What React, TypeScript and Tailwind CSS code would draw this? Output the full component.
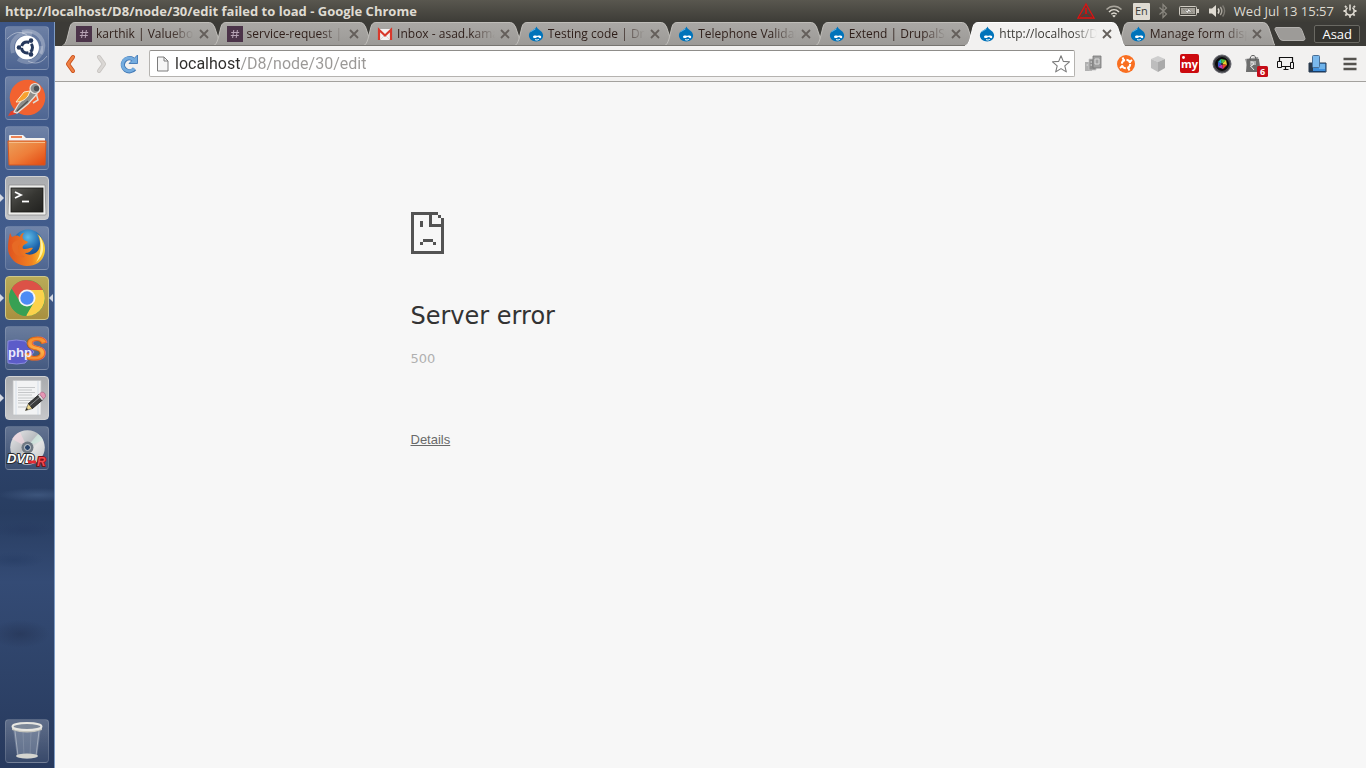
import { ReactNode } from "react";
import clsx from "clsx";

type Favicon = "slack" | "gmail" | "drupal";

interface TabData {
  title: string;
  icon: Favicon;
  active?: boolean;
}

const tabs: TabData[] = [
  { title: "karthik | Valuebound", icon: "slack" },
  { title: "service-request | Valuebound", icon: "slack" },
  { title: "Inbox - asad.kamal@gmail", icon: "gmail" },
  { title: "Testing code | Drupal.org", icon: "drupal" },
  { title: "Telephone Validation", icon: "drupal" },
  { title: "Extend | DrupalSite", icon: "drupal" },
  { title: "http://localhost/D8/node", icon: "drupal", active: true },
  { title: "Manage form display", icon: "drupal" },
];

const FaviconIcon = ({ icon }: { icon: Favicon }) => {
  if (icon === "slack") {
    return (
      <svg viewBox="0 0 16 16" className="size-4 shrink-0" aria-hidden="true">
        <rect width="16" height="16" fill="#4b3349" />
        <path d="M6.8 4 5.6 12M10.4 4 9.2 12M4.2 6.5h8M3.8 9.5h8" stroke="#b7a3b5" fill="none" />
      </svg>
    );
  }
  if (icon === "gmail") {
    return (
      <svg viewBox="0 0 16 16" className="size-4 shrink-0" aria-hidden="true">
        <path d="M1 3h14v11H1z" fill="#f3f3f3" />
        <path d="M3 14 8 9l5 5" stroke="#d6d6d6" fill="none" />
        <path d="M2 14V3.800l6 5.700 6-5.700V14" stroke="#d8392c" strokeWidth="2.200" fill="none" />
      </svg>
    );
  }
  return (
    <svg viewBox="0 0 16 16" className="size-4 shrink-0" aria-hidden="true">
      <path
        d="M8.4.5c.8 1.900 2 2.800 3.600 3.900 2 1.300 3.100 3 3.100 5.200 0 3.600-3.100 5.900-6.900 5.900-4 0-7.300-2.300-7.300-6.200 0-2.400 1.500-4 3.600-5.100C6.500 3.200 7.900 2.200 8.400.5z"
        fill="#0073ba"
      />
      <path
        d="M11.200 9.600c1.400-.2 2.200.7 2 1.700-.2.900-1 1-1.700.7-.7-.4-1.200-1-1.900-1-.8 0-1.500 1.200-3 1.100-1.200-.1-1.800-.9-1.500-1.700.3-.9 1.400-1.200 2.500-.9 1.200.3 2.400.3 3.600.1z"
        fill="#fff"
      />
      <path d="M7 13.600c1.200.6 2.900.5 3.800-.2" stroke="#fff" fill="none" />
      <path d="M2.500 5.800C4 4.600 6.200 4 7.500 3" stroke="#5ab2e6" fill="none" />
    </svg>
  );
};

const Tab = ({ title, icon, active }: TabData) => {
  return (
    <li
      className={clsx(
        "relative -mr-[9px] flex h-6 min-w-0 flex-1 items-center pr-3 pl-[14px]",
        active && "z-10",
      )}
    >
      <svg
        viewBox="0 0 160 24"
        preserveAspectRatio="none"
        className="absolute inset-0 size-full"
        aria-hidden="true"
      >
        <defs>
          <linearGradient id="tab-fill" x1="0" y1="0" x2="0" y2="1">
            <stop offset="0" stopColor="#aaa8a5" />
            <stop offset="1" stopColor="#9b9996" />
          </linearGradient>
        </defs>
        <path
          d="M0 24C3 23 4 20 5 17L8 5Q9 .5 13 .5H148Q151 .5 153 5L157 17Q158 22 160 24z"
          fill={active ? "#f2f1f0" : "url(#tab-fill)"}
        />
        <path
          d="M0 24C3 23 4 20 5 17L8 5Q9 .5 13 .5H148Q151 .5 153 5L157 17Q158 22 160 24"
          fill="none"
          stroke={active ? "#ffffff" : "#c0beba"}
        />
        {!active && <path d="M0 23.500H160" stroke="#75736f" />}
      </svg>
      <span className="relative flex min-w-0 flex-1 items-center gap-1">
        <FaviconIcon icon={icon} />
        <a
          href="#"
          className={clsx(
            "min-w-0 flex-1 overflow-hidden text-[12px] leading-5 whitespace-nowrap",
            "mask-r-from-75% mask-r-to-100%",
            active ? "text-[#3c3b37]" : "text-[#2f1f1a]",
          )}
        >
          {title}
        </a>
        <button aria-label={`Close ${title}`} className="flex size-3 items-center justify-center">
          <svg viewBox="0 0 10 10" className="size-[10px]" aria-hidden="true">
            <path d="M1 1l8 8M9 1l-8 8" stroke="#645f5b" strokeWidth="1.800" />
          </svg>
        </button>
      </span>
    </li>
  );
};

const TopPanel = () => {
  return (
    <header className="flex h-[22px] items-center justify-between bg-gradient-to-b from-[#59574f] to-[#3d3c37] pr-2 pl-[5px] text-[#dfdbd2]">
      <h1 className="text-[13px] leading-5 font-bold whitespace-nowrap">
        http://localhost/D8/node/30/edit failed to load - Google Chrome
      </h1>
      <div className="flex items-center">
        <svg viewBox="0 0 18 18" className="mr-[10px] size-[18px]" aria-label="Warning">
          <path d="M9 2 17 16H1z" fill="none" stroke="#e01212" strokeWidth="1.300" />
          <path d="M9 4v7M9 11l-7 4.500M9 11l7 4.500" stroke="#a31613" fill="none" />
          <path d="M9 6v6" stroke="#e01212" strokeWidth="1.400" />
        </svg>
        <svg viewBox="0 0 18 18" className="mr-[10px] size-[18px]" aria-label="Wi-Fi">
          <g fill="none" stroke="#dfdbd2" strokeWidth="1.500">
            <path d="M1.500 7.500c4.500-4.300 10.500-4.300 15 0" stroke="#aaa69d" />
            <path d="M4 10c3-2.900 7-2.900 10 0" />
            <path d="M6.300 12.300c1.600-1.500 3.800-1.500 5.400 0" />
          </g>
          <path d="m9 15.500-1.800-1.800c1.200-1 2.400-1 3.600 0z" fill="#dfdbd2" />
        </svg>
        <button className="mr-2 flex h-[17px] w-[17px] items-center justify-center rounded-[1px] bg-[#dfdbd2] text-[11px] text-[#3c3b37]">
          En
        </button>
        <svg viewBox="0 0 10 16" className="mr-[10px] h-4 w-[10px]" aria-label="Bluetooth">
          <path
            d="m1.500 4.500 7 6.500L5 14.500v-13L8.500 5l-7 6.500"
            fill="none"
            stroke="#8b8880"
            strokeWidth="1.200"
          />
        </svg>
        <svg viewBox="0 0 22 14" className="mr-2 h-[14px] w-[22px]" aria-label="Battery">
          <rect x="1.500" y="2.500" width="17" height="9" rx="1" fill="none" stroke="#cfcbc2" />
          <rect x="3" y="4" width="14" height="6" fill="#a19e96" />
          <path d="M19 5h2v4h-2z" fill="#cfcbc2" />
          <path d="m5.500 5.500 4 1.500.5-2.500 4.500 4-4-1-.5 2z" fill="#fff" stroke="#5a5850" strokeWidth=".5" />
        </svg>
        <svg viewBox="0 0 18 16" className="mr-2 h-4 w-[18px]" aria-label="Volume">
          <path d="M1 5.500h3l4-3.500v12l-4-3.500H1z" fill="#dfdbd2" />
          <g fill="none" strokeWidth="1.400">
            <path d="M10 5.500q2 2.500 0 5" stroke="#dfdbd2" />
            <path d="M12.300 4q3 4 0 8" stroke="#a9a59c" />
            <path d="M14.600 2.500q4 5.500 0 11" stroke="#7c7972" />
          </g>
        </svg>
        <time className="mr-2 text-[13px] leading-5 whitespace-nowrap">Wed Jul 13 15:57</time>
        <button aria-label="System menu">
          <svg viewBox="0 0 16 16" className="size-4" aria-hidden="true">
            <g fill="none" stroke="#dfdbd2">
              <path d="M5.500 4.600a4.200 4.200 0 1 0 5 0" strokeWidth="1.600" />
              <path d="M8 1.500v6" strokeWidth="1.600" />
              <path
                d="M4.400 4.400 3 3M11.600 4.400 13 3M3.600 8H1.500M14.500 8h-2.100M4.800 11.200 3.300 12.700M11.200 11.200l1.500 1.500M8 12.500v2.200"
                strokeWidth="1.800"
              />
            </g>
          </svg>
        </button>
      </div>
    </header>
  );
};

interface LauncherTile {
  label: string;
  tone?: "glass" | "light" | "gold";
  running?: boolean;
  focused?: boolean;
  children: ReactNode;
}

const LauncherTile = ({ label, tone = "glass", running, focused, children }: LauncherTile) => {
  return (
    <div className="relative flex justify-center">
      {running && (
        <span className="absolute top-[18px] left-0 border-y-4 border-l-4 border-y-transparent border-l-[#d5d9e2]" />
      )}
      {focused && (
        <span className="absolute top-[18px] right-0 border-y-4 border-r-4 border-y-transparent border-r-[#d5d9e2]" />
      )}
      <button
        aria-label={label}
        className={clsx(
          "size-11 rounded-[4px] border bg-gradient-to-b",
          tone === "glass" && "border-white/15 from-white/25 to-white/8",
          tone === "light" && "border-[#d0d1d3] from-[#a9abae] to-[#c6c7c9]",
          tone === "gold" && "border-[#cfc78a] from-[#b9ab58] to-[#a8903f]",
        )}
      >
        <svg viewBox="1 1 42 42" className="size-full" aria-hidden="true">
          {children}
        </svg>
      </button>
    </div>
  );
};

const Launcher = () => {
  return (
    <nav
      aria-label="Launcher"
      className="flex w-[55px] shrink-0 flex-col gap-[6px] border-r border-[#7f9cc4] bg-[radial-gradient(ellipse_30px_14px_at_20px_612px,#24335399,transparent),radial-gradient(ellipse_40px_7px_at_38px_473px,#4a648c99,transparent),radial-gradient(ellipse_35px_8px_at_25px_508px,#26395f99,transparent),radial-gradient(ellipse_30px_8px_at_14px_538px,#253b6288,transparent),linear-gradient(to_bottom,#3d5687_0px,#425c8c_220px,#2f456d_400px,#283d61_490px,#344b75_560px,#2e4369_650px,#27395d_746px)] pt-1 pr-px pb-[5px]"
    >
      <LauncherTile label="Dash home">
        <g fill="none" stroke="#fff">
          <path d="M8 27C4 14 14 5 27 8" strokeWidth="4" opacity=".22" />
          <path d="M17 6c16-4 26 10 19 22" strokeWidth="4" opacity=".28" />
          <path d="M36 20c2 14-13 20-23 13" strokeWidth="4" opacity=".22" />
          <path d="M2 13C8 7 14 4 22 9M42 30c-5 7-12 9-19 5" opacity=".4" />
        </g>
        <circle cx="22" cy="21.500" r="12" fill="#fff" />
        <circle
          cx="22"
          cy="21.500"
          r="5.500"
          fill="none"
          stroke="#26385c"
          strokeWidth="3"
          strokeDasharray="9.500 2"
          strokeDashoffset="4.700"
        />
        <circle cx="14" cy="21.500" r="2.300" fill="#26385c" />
        <circle cx="26" cy="14.600" r="2.300" fill="#26385c" />
        <circle cx="26" cy="28.400" r="2.300" fill="#26385c" />
      </LauncherTile>
      <LauncherTile label="Postman">
        <circle cx="22.500" cy="21.500" r="17.800" fill="#f26230" />
        <path d="M3 40c2-5 6-7 10-6l-2 4z" fill="#e5402a" />
        <path d="m27 14 5 4-9 10-11 9-3-1 4-7 7-9z" fill="#8d8d8a" stroke="#e6e3dd" strokeWidth="1.200" />
        <path d="m25 15-6 1-8 10c5 0 9-2 12-6z" fill="#f7a12f" stroke="#fbe9cf" />
        <path d="m12 35 11-10" stroke="#4f5150" strokeWidth="1.200" />
        <circle cx="30" cy="12.500" r="5" fill="#8c8f8f" stroke="#e8e5df" strokeWidth="1.200" />
        <circle cx="31.500" cy="12.500" r="2.700" fill="#4c5053" />
        <path d="m31 17 2 7-5 3" stroke="#dedbd5" strokeWidth="1.500" fill="none" />
      </LauncherTile>
      <LauncherTile label="Files">
        <defs>
          <linearGradient id="folder" x1="0" y1="0" x2="1" y2="1">
            <stop offset="0" stopColor="#eba05b" />
            <stop offset=".5" stopColor="#ee7e3a" />
            <stop offset="1" stopColor="#e2460f" />
          </linearGradient>
        </defs>
        <path d="M4 18V10q0-1 1-1h13l3 3h18q1 0 1 1v5z" fill="#f4f2ef" />
        <path d="M6 10h11v2H6z" fill="#eb8254" />
        <path d="M3 15h38l-1 24H4z" fill="url(#folder)" stroke="#d45622" />
        <path d="M4 16.500h36" stroke="#f5bd8a" />
      </LauncherTile>
      <LauncherTile label="Terminal" tone="light" running>
        <defs>
          <linearGradient id="screen" x1="0" y1="0" x2="1" y2="1">
            <stop offset="0" stopColor="#5a5a56" />
            <stop offset=".5" stopColor="#363632" />
            <stop offset="1" stopColor="#21211f" />
          </linearGradient>
        </defs>
        <path d="M4 9h36l1 29q0 1-1 1H4q-1 0-1-1z" fill="#eeeeec" stroke="#8d8e8f" strokeWidth=".8" />
        <rect x="6" y="12" width="32" height="24" fill="url(#screen)" stroke="#171716" strokeWidth=".8" />
        <path d="m10 16 6 3-6 3" fill="none" stroke="#fff" strokeWidth="1.800" />
        <path d="M17 25.500h7" stroke="#fff" strokeWidth="1.800" />
      </LauncherTile>
      <LauncherTile label="Firefox">
        <defs>
          <radialGradient id="globe" cx=".5" cy=".25" r=".8">
            <stop offset="0" stopColor="#5ebbe8" />
            <stop offset=".5" stopColor="#1e66ad" />
            <stop offset="1" stopColor="#142d66" />
          </radialGradient>
          <linearGradient id="fox" x1="0" y1="0" x2="1" y2="0">
            <stop offset="0" stopColor="#e0531f" />
            <stop offset=".65" stopColor="#f08421" />
            <stop offset="1" stopColor="#fcd733" />
          </linearGradient>
        </defs>
        <circle cx="23" cy="19" r="15.500" fill="url(#globe)" />
        <path
          d="M5 7c1 1 1 3 2 4 3-2 6-2 8 0 0-2 2-4 4-4-2 3-2 5 0 7 1 1 3 1 4 2-1 2-4 2-5 4-1 2 0 3 2 3 3 0 5-2 8-1-2 3-4 5-8 5 3 3 11 2 14-4 2-5 1-11-2-15 5 3 8 9 8 15 0 11-8 17-18 17S3 32 3 22C3 16 4 11 5 7z"
          fill="url(#fox)"
        />
        <path d="M34 9c6 8 6 20-3 27 5-7 6-18 3-27z" fill="#fff3a6" />
        <path d="M7 19c1-3 4-5 8-5l3 2-5 4 1 7 6 4c-7 1-13-4-13-12z" fill="#e76a25" />
      </LauncherTile>
      <LauncherTile label="Google Chrome" tone="gold" running focused>
        <circle cx="22" cy="22" r="18" fill="#4bab50" />
        <path d="M22 14h15.900A18 18 0 0 1 22 40l-1-1 8-13z" fill="#fbd24b" />
        <path d="M22 14h16A18 18 0 0 0 6.600 12.700L15 26z" fill="#dc5247" />
        <path d="M6.600 12.700A18 18 0 0 0 21 40l8-14-14 0z" fill="#38a053" />
        <circle cx="22" cy="22" r="8.500" fill="#f4f4f4" />
        <circle cx="22" cy="22" r="6.700" fill="#4c8bf5" />
      </LauncherTile>
      <LauncherTile label="PhpStorm">
        <defs>
          <linearGradient id="storm" x1="0" y1="0" x2="0" y2="1">
            <stop offset="0" stopColor="#f47a1b" />
            <stop offset=".6" stopColor="#fbb04a" />
            <stop offset="1" stopColor="#ee6615" />
          </linearGradient>
        </defs>
        <path d="M3 15q8-2 17 0l9 11-9 11q-8 2-17 0-1-11 0-22z" fill="#5c5cc9" stroke="#8b8cdc" />
        <text
          x="19"
          y="34"
          fontSize="34"
          fontWeight="bold"
          fontStyle="italic"
          fontFamily="Liberation Sans"
          fill="url(#storm)"
          stroke="#e8691a"
        >
          S
        </text>
        <text x="3" y="31" fontSize="13" fontWeight="bold" fontFamily="Liberation Sans" fill="#eceafd">
          php
        </text>
      </LauncherTile>
      <LauncherTile label="Text Editor" tone="light" running>
        <path d="M8 4.500h28V39H8z" fill="#f2f3f4" stroke="#c1c3c5" strokeWidth=".8" />
        <path d="M11 5v34M33 5v34" stroke="#c5d3e2" strokeWidth=".6" />
        <path
          d="M13 11.500h17M13 14h14M13 16.500h17M13 19h14M13 22h17M13 24.500h14M13 27h12M13 31h9"
          stroke="#b9bbbe"
          strokeWidth=".8"
        />
        <path d="m20.500 34.500 3-7 4 5z" fill="#ecd78f" stroke="#4c4837" strokeWidth=".6" />
        <path d="m20.500 34.500 1.200-2.700 1.400 1.800z" fill="#1f1f1f" />
        <path d="m23.500 27.500 10.500-9 4 5-10.500 9z" fill="#3b3c3d" stroke="#171717" strokeWidth=".8" />
        <path d="m25 29.500 10.500-9" stroke="#8b8d8f" />
        <path d="m33 19.300 1.500-1.300 4 5-1.500 1.300z" fill="#dcdcdc" />
        <path d="m34.500 18 2-2q4 0 4 4.500L38.500 23z" fill="#e495b3" stroke="#a5577a" strokeWidth=".6" />
      </LauncherTile>
      <LauncherTile label="DVD-R">
        <defs>
          <linearGradient id="disc" x1="0" y1="0" x2="1" y2="1">
            <stop offset="0" stopColor="#eceded" />
            <stop offset=".45" stopColor="#b9bcc0" />
            <stop offset=".6" stopColor="#e4e4e4" />
            <stop offset="1" stopColor="#bfc1c4" />
          </linearGradient>
        </defs>
        <circle cx="22.500" cy="21.500" r="17.300" fill="url(#disc)" />
        <path d="m22 21-7-15q-5 2-8 7z" fill="#f7d7e1" opacity=".6" />
        <path d="m22 21 16-7q-2-4-5-6z" fill="#d0eadf" opacity=".7" />
        <circle cx="22.500" cy="21.500" r="6" fill="#707983" />
        <circle cx="22.500" cy="21.500" r="3" fill="#29446a" stroke="#d2d5d8" />
        <g
          fontFamily="Liberation Sans"
          fontWeight="bold"
          fontStyle="italic"
          paintOrder="stroke"
          strokeLinejoin="round"
        >
          <text x="2" y="37" fontSize="13" fill="#fff" stroke="#27282b" strokeWidth="2">
            DVD
          </text>
          <path d="M23 36h8" stroke="#e22b34" strokeWidth="3" />
          <text x="32" y="40" fontSize="12" fill="#f04a50" stroke="#7c1016" strokeWidth="2">
            R
          </text>
        </g>
      </LauncherTile>
      <div className="mt-auto">
        <LauncherTile label="Trash">
          <path d="M8 9h28l-4 29q-10 4-20 0z" fill="#a9b4c6" opacity=".35" />
          <path d="m10 12 3 25M34 12l-3 25" stroke="#dce0e6" strokeWidth=".8" opacity=".6" />
          <path d="m18 13 1 24M26 13l-1 24" stroke="#dce0e6" strokeWidth=".8" opacity=".2" />
          <ellipse cx="22" cy="37" rx="11" ry="2.500" fill="#d5d5d0" />
          <path d="M7 8v3q15 5 30 0V8z" fill="#c5c5be" />
          <ellipse cx="22" cy="7.500" rx="14.500" ry="3.500" fill="#7c8798" stroke="#e8e7e2" strokeWidth="2" />
        </LauncherTile>
      </div>
    </nav>
  );
};

const extensions: { label: string; icon: ReactNode }[] = [
  {
    label: "Copy pages",
    icon: (
      <>
        <path d="M1 8h7v9H1z" fill="#b0b0b0" />
        <path d="M5 5h7v11H5z" fill="#8e8e8e" stroke="#c7c7c7" strokeWidth=".8" />
        <path d="M9 2h8v12H9z" fill="#a0a0a0" stroke="#777" strokeWidth=".8" />
        <path d="M11 5h4v5h-4z" fill="none" stroke="#d9d9d9" />
        <path d="M6.500 8H8M6.500 11H8M2.500 11H4" stroke="#e3e3e3" />
      </>
    ),
  },
  {
    label: "Sync",
    icon: (
      <>
        <circle cx="10" cy="10" r="9" fill="#f96f21" />
        <circle cx="10" cy="10" r="4.200" fill="none" stroke="#fff" strokeWidth="2" strokeDasharray="5 1.600" />
        <path d="M8 6.500 6.500 3.500M13.500 8l2.500-2M12 13.500l1.500 3M6.500 12 4 14" stroke="#fff" strokeWidth="2" />
      </>
    ),
  },
  {
    label: "Package",
    icon: (
      <>
        <path d="m10 2 7 3-7 3-7-3z" fill="#cecece" />
        <path d="M3 5l7 3v10l-7-4z" fill="#bdbdbd" />
        <path d="m17 5-7 3v10l7-4z" fill="#a9a9a9" />
      </>
    ),
  },
  {
    label: "my",
    icon: (
      <>
        <rect x="0" y="0" width="19" height="19" rx="2" fill="#cc0a0f" />
        <circle cx="3.500" cy="3.500" r="1.400" fill="#fff" />
        <text x="1" y="14" fontSize="11" fontWeight="bold" fontFamily="Open Sans" fill="#fff">
          my
        </text>
      </>
    ),
  },
  {
    label: "Camera lens",
    icon: (
      <>
        <circle cx="10" cy="10" r="9" fill="#3d3e43" stroke="#696970" />
        <circle cx="10" cy="10" r="6.300" fill="#111" stroke="#000" />
        <path d="m10 10-4-2 3-3z" fill="#16b5c9" />
        <path d="m10 10-1-5 5 1z" fill="#51c144" />
        <path d="m10 10 4-4 1 5z" fill="#e9cf30" />
        <path d="m10 10 5 1-4 4z" fill="#e8442e" />
        <path d="m10 10 1 5-5-2z" fill="#bb34b1" />
        <path d="m10 10-4 3V8z" fill="#3c55ce" />
        <circle cx="10" cy="10" r="1" fill="#2a2a2a" />
      </>
    ),
  },
  {
    label: "Price tracker, 6 alerts",
    icon: (
      <>
        <path d="M1 5 14 3l3 12-12 3z" fill="#9a9a9a" />
        <path d="M3 5h12l1 13H2z" fill="#6d6d6d" />
        <path d="M6 6q0-4.500 3-4.500T12 6" fill="none" stroke="#555" />
        <path d="M6 8h6M6 10h6M7 8q4 0 2 3L6.500 12l3.500 4" stroke="#ededed" fill="none" />
        <rect x="13" y="12" width="11" height="11" rx="1.500" fill="#c50d18" />
        <text x="16" y="21" fontSize="9" fontWeight="bold" fontFamily="Open Sans" fill="#fff">
          6
        </text>
      </>
    ),
  },
  {
    label: "Responsive view",
    icon: (
      <g fill="#f2f1f0" stroke="#111">
        <path d="M3.500 3.500h13v9h-13zM9.500 12.500v3h-2h5" strokeWidth="1.200" />
        <path d="M1.500 7.500h4v6h-4z" />
        <path d="M14.500 8.500h3v6h-3z" />
      </g>
    ),
  },
  {
    label: "Device sync",
    icon: (
      <>
        <path d="M1 9h17v9H1z" fill="#3f8fdc" stroke="#26394f" />
        <path d="M1 9h4v9H1z" fill="#2a3a4c" />
        <path d="M11 10h6v5h-6z" fill="#6fb3ea" />
        <rect x="4.500" y="1.500" width="7" height="12" rx="1" fill="#7bb9ed" stroke="#4a6f95" />
        <path d="M2 17.500h15" stroke="#193d67" />
      </>
    ),
  },
];

const Toolbar = () => {
  return (
    <div className="flex h-9 items-center border-b border-[#a3a19e] bg-[#f2f1f0] pr-[6px] pl-2">
      <button aria-label="Back" className="flex size-4 items-center justify-center">
        <svg viewBox="0 0 16 20" className="h-5 w-4" aria-hidden="true">
          <g fill="none" strokeLinecap="round" strokeLinejoin="round">
            <path d="M10 3 5 10l5 7" stroke="#c84d17" strokeWidth="4" />
            <path d="M10 3 5 10l5 7" stroke="#ee8045" strokeWidth="2.400" />
          </g>
        </svg>
      </button>
      <button aria-label="Forward" disabled className="ml-4 flex size-4 items-center justify-center">
        <svg viewBox="0 0 16 20" className="h-5 w-4" aria-hidden="true">
          <g fill="none" strokeLinecap="round" strokeLinejoin="round">
            <path d="m4 3 5 7-5 7" stroke="#c6c3c0" strokeWidth="4" />
            <path d="m4 3 5 7-5 7" stroke="#dad7d4" strokeWidth="2.400" />
          </g>
        </svg>
      </button>
      <button aria-label="Reload" className="ml-2">
        <svg viewBox="0 0 20 20" className="size-5" aria-hidden="true">
          <path d="M15.500 14.800A6.500 6.500 0 1 1 14 5.300" fill="none" stroke="#3f77b4" strokeWidth="4.400" />
          <path d="M18.500 1v8.500H10z" fill="#74acdf" stroke="#3f77b4" strokeWidth=".9" />
          <path d="M15.300 14.300A6.500 6.500 0 1 1 14.500 5.800" fill="none" stroke="#74acdf" strokeWidth="3" />
        </svg>
      </button>
      <div className="ml-[10px] flex h-[27px] min-w-0 flex-1 items-center rounded-[2px] border border-[#b5b3b0] border-t-[#8f8d8a] bg-white pr-[3px] pl-[6px]">
        <svg viewBox="0 0 14 16" className="h-4 w-[14px] shrink-0" aria-hidden="true">
          <path d="M1.500 1h6.500l4 4v10H1.500z" fill="#f6f6f6" stroke="#7c7c7c" />
          <path d="M8 1v4h4" fill="none" stroke="#7c7c7c" />
        </svg>
        {/* host part is dark, the path is grey */}
        <input
          type="text"
          aria-label="Address"
          defaultValue="localhost/D8/node/30/edit"
          className="ml-[5px] h-6 min-w-0 flex-1 bg-[linear-gradient(to_right,#2e2d2b_65px,#9a9896_65px)] bg-clip-text font-[Roboto,sans-serif] text-[16px] leading-6 text-transparent caret-black outline-none"
        />
        <button aria-label="Bookmark this page">
          <svg viewBox="0 0 20 20" className="size-5" aria-hidden="true">
            <path
              d="m10 1.800 2.300 5.600 6.200.4-4.700 4 1.500 6.100-5.300-3.300-5.300 3.300 1.500-6.100-4.700-4 6.200-.4z"
              fill="#fff"
              stroke="#7b7b7b"
              strokeWidth="1.100"
              strokeLinejoin="round"
            />
          </svg>
        </button>
      </div>
      <div className="ml-[9px] flex gap-3">
        {extensions.map((ext) => (
          <button key={ext.label} aria-label={ext.label}>
            <svg viewBox="0 0 20 20" className="size-5 overflow-visible" aria-hidden="true">
              {ext.icon}
            </svg>
          </button>
        ))}
        <button aria-label="Chrome menu">
          <svg viewBox="0 0 20 20" className="size-5" aria-hidden="true">
            <path d="M3.500 5h13M3.500 10h13M3.500 15h13" stroke="#55534f" strokeWidth="2.500" />
          </svg>
        </button>
      </div>
    </div>
  );
};

const ErrorPage = () => {
  return (
    <main className="flex-1 bg-[#f7f7f7] pt-[130px]">
      <div className="mx-auto w-[600px] max-w-full">
        <svg viewBox="0 0 33 42" shapeRendering="crispEdges" className="h-[42px] w-[33px]" aria-hidden="true">
          <path
            fill="#535353"
            fillRule="evenodd"
            d="M0 0h27v3h3v3h3v36H0zM3 3v36h27V15H18V3zM21 3v9h9V6h-3V3zM9 9h3v6H9zM12 27h10v3H12zM9 30h3v3H9zM22 30h3v3h-3z"
          />
        </svg>
        <h2 className="mt-[47px] font-['DejaVu_Sans',sans-serif] text-[24px] leading-[30px] text-[#333]">
          Server error
        </h2>
        <p className="mt-[18px] font-['DejaVu_Sans',sans-serif] text-[13px] leading-5 text-[#b0b0b0]">500</p>
        <button className="mt-[61px] block font-['Liberation_Sans',sans-serif] text-[13px] leading-5 text-[#696969] underline">
          Details
        </button>
      </div>
    </main>
  );
};

const App = () => {
  return (
    <div className="flex min-h-screen flex-col bg-[#3c3b37] font-['Open_Sans',sans-serif]">
      <TopPanel />
      <div className="flex flex-1">
        <Launcher />
        <div className="flex min-w-0 flex-1 flex-col">
          <div className="flex h-6 items-center bg-[#3c3b37] pr-[6px] pl-[7px]">
            <ul className="flex min-w-0 flex-1 pr-2">
              {tabs.map((tab) => (
                <Tab key={tab.title} {...tab} />
              ))}
            </ul>
            <button aria-label="New tab">
              <svg viewBox="0 0 32 16" className="h-4 w-8" aria-hidden="true">
                <path
                  d="M2 1.500h23q2 0 3 3l3 8q0 2-2 2H9q-3 0-4-3L1 3.500q0-2 1-2z"
                  fill="#9d9b98"
                  stroke="#b4b2af"
                />
              </svg>
            </button>
            <button className="ml-2 h-[18px] rounded-[2px] border border-[#6a6963] bg-[#34332f] px-[7px] text-[13px] leading-4 text-white">
              Asad
            </button>
          </div>
          <Toolbar />
          <ErrorPage />
        </div>
      </div>
    </div>
  );
};

export default App;
